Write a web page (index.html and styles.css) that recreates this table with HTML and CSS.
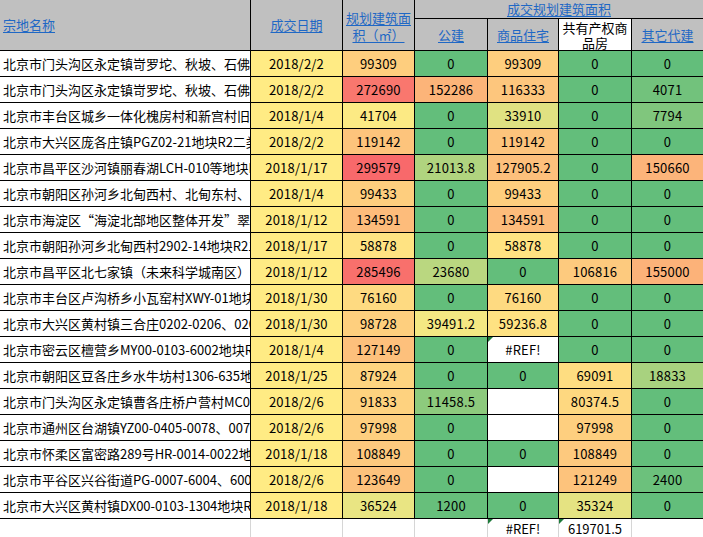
FILE: index.html
```html
<!DOCTYPE html>
<html lang="zh-CN">
<head>
<meta charset="utf-8">
<title>成交规划建筑面积</title>
<link rel="stylesheet" href="styles.css">
</head>
<body>
<div class="sheet">
  <div class="c h name"><span class="link">宗地名称</span></div>
  <div class="c h tall"><span class="link">成交日期</span></div>
  <div class="c h tall two"><span class="line"><span class="link">规划建筑面</span></span><span class="line"><span class="link">积（㎡）</span></span></div>
  <div class="c h group"><span class="link">成交规划建筑面积</span></div>
  <div class="c h"><span class="link">公建</span></div>
  <div class="c h"><span class="link">商品住宅</span></div>
  <div class="c h plain"><span class="pline">共有产权商</span><span class="pline">品房</span></div>
  <div class="c h"><span class="link">其它代建</span></div>

  <div class="c t"><span class="clip">北京市门头沟区永定镇岢罗坨、秋坡、石佛寺</span></div>
  <div class="c n" style="background:#ffeb84">2018/2/2</div>
  <div class="c n" style="background:#fece7e">99309</div>
  <div class="c n" style="background:#63be7b">0</div>
  <div class="c n" style="background:#fece7e">99309</div>
  <div class="c n" style="background:#63be7b">0</div>
  <div class="c n" style="background:#63be7b">0</div>

  <div class="c t"><span class="clip">北京市门头沟区永定镇岢罗坨、秋坡、石佛寺</span></div>
  <div class="c n" style="background:#ffeb84">2018/2/2</div>
  <div class="c n" style="background:#f9776e">272690</div>
  <div class="c n" style="background:#fcb479">152286</div>
  <div class="c n" style="background:#fdc67d">116333</div>
  <div class="c n" style="background:#63be7b">0</div>
  <div class="c n" style="background:#72c27c">4071</div>

  <div class="c t"><span class="clip">北京市丰台区城乡一体化槐房村和新宫村旧村</span></div>
  <div class="c n" style="background:#ffeb84">2018/1/4</div>
  <div class="c n" style="background:#fcea84">41704</div>
  <div class="c n" style="background:#63be7b">0</div>
  <div class="c n" style="background:#e0e282">33910</div>
  <div class="c n" style="background:#63be7b">0</div>
  <div class="c n" style="background:#80c67d">7794</div>

  <div class="c t"><span class="clip">北京市大兴区庞各庄镇PGZ02-21地块R2二类</span></div>
  <div class="c n" style="background:#ffeb84">2018/2/2</div>
  <div class="c n" style="background:#fdc47c">119142</div>
  <div class="c n" style="background:#63be7b">0</div>
  <div class="c n" style="background:#fdc47c">119142</div>
  <div class="c n" style="background:#63be7b">0</div>
  <div class="c n" style="background:#63be7b">0</div>

  <div class="c t"><span class="clip">北京市昌平区沙河镇丽春湖LCH-010等地块F1</span></div>
  <div class="c n" style="background:#ffeb84">2018/1/17</div>
  <div class="c n" style="background:#f8696b">299579</div>
  <div class="c n" style="background:#b0d47f">21013.8</div>
  <div class="c n" style="background:#fdc07c">127905.2</div>
  <div class="c n" style="background:#63be7b">0</div>
  <div class="c n" style="background:#fcb47a">150660</div>

  <div class="c t"><span class="clip">北京市朝阳区孙河乡北甸西村、北甸东村、西</span></div>
  <div class="c n" style="background:#ffeb84">2018/1/4</div>
  <div class="c n" style="background:#fece7e">99433</div>
  <div class="c n" style="background:#63be7b">0</div>
  <div class="c n" style="background:#fece7e">99433</div>
  <div class="c n" style="background:#63be7b">0</div>
  <div class="c n" style="background:#63be7b">0</div>

  <div class="c t"><span class="clip">北京市海淀区“海淀北部地区整体开发”翠湖</span></div>
  <div class="c n" style="background:#ffeb84">2018/1/12</div>
  <div class="c n" style="background:#fdbc7b">134591</div>
  <div class="c n" style="background:#63be7b">0</div>
  <div class="c n" style="background:#fdbc7b">134591</div>
  <div class="c n" style="background:#63be7b">0</div>
  <div class="c n" style="background:#63be7b">0</div>

  <div class="c t"><span class="clip">北京市朝阳孙河乡北甸西村2902-14地块R2二</span></div>
  <div class="c n" style="background:#ffeb84">2018/1/17</div>
  <div class="c n" style="background:#ffe382">58878</div>
  <div class="c n" style="background:#63be7b">0</div>
  <div class="c n" style="background:#ffe382">58878</div>
  <div class="c n" style="background:#63be7b">0</div>
  <div class="c n" style="background:#63be7b">0</div>

  <div class="c t"><span class="clip">北京市昌平区北七家镇（未来科学城南区）地</span></div>
  <div class="c n" style="background:#ffeb84">2018/1/12</div>
  <div class="c n" style="background:#f8706c">285496</div>
  <div class="c n" style="background:#bad780">23680</div>
  <div class="c n" style="background:#63be7b">0</div>
  <div class="c n" style="background:#fdca7e">106816</div>
  <div class="c n" style="background:#fcb279">155000</div>

  <div class="c t"><span class="clip">北京市丰台区卢沟桥乡小瓦窑村XWY-01地块R</span></div>
  <div class="c n" style="background:#ffeb84">2018/1/30</div>
  <div class="c n" style="background:#feda81">76160</div>
  <div class="c n" style="background:#63be7b">0</div>
  <div class="c n" style="background:#feda81">76160</div>
  <div class="c n" style="background:#63be7b">0</div>
  <div class="c n" style="background:#63be7b">0</div>

  <div class="c t"><span class="clip">北京市大兴区黄村镇三合庄0202-0206、0202</span></div>
  <div class="c n" style="background:#ffeb84">2018/1/30</div>
  <div class="c n" style="background:#fecf7e">98728</div>
  <div class="c n" style="background:#f4e883">39491.2</div>
  <div class="c n" style="background:#fee282">59236.8</div>
  <div class="c n" style="background:#63be7b">0</div>
  <div class="c n" style="background:#63be7b">0</div>

  <div class="c t"><span class="clip">北京市密云区檀营乡MY00-0103-6002地块R2</span></div>
  <div class="c n" style="background:#ffeb84">2018/1/4</div>
  <div class="c n" style="background:#fdc07c">127149</div>
  <div class="c n" style="background:#63be7b">0</div>
  <div class="c n flag">#REF!</div>
  <div class="c n" style="background:#63be7b">0</div>
  <div class="c n" style="background:#63be7b">0</div>

  <div class="c t"><span class="clip">北京市朝阳区豆各庄乡水牛坊村1306-635地块</span></div>
  <div class="c n" style="background:#ffeb84">2018/1/25</div>
  <div class="c n" style="background:#fed480">87924</div>
  <div class="c n" style="background:#63be7b">0</div>
  <div class="c n" style="background:#63be7b">0</div>
  <div class="c n" style="background:#fedd81">69091</div>
  <div class="c n" style="background:#a8d27f">18833</div>

  <div class="c t"><span class="clip">北京市门头沟区永定镇曹各庄桥户营村MC00-</span></div>
  <div class="c n" style="background:#ffeb84">2018/2/6</div>
  <div class="c n" style="background:#fed27f">91833</div>
  <div class="c n" style="background:#8dca7d">11458.5</div>
  <div class="c n"></div>
  <div class="c n" style="background:#fed880">80374.5</div>
  <div class="c n" style="background:#63be7b">0</div>

  <div class="c t"><span class="clip">北京市通州区台湖镇YZ00-0405-0078、0079</span></div>
  <div class="c n" style="background:#ffeb84">2018/2/6</div>
  <div class="c n" style="background:#fecf7f">97998</div>
  <div class="c n" style="background:#63be7b">0</div>
  <div class="c n"></div>
  <div class="c n" style="background:#fecf7f">97998</div>
  <div class="c n" style="background:#63be7b">0</div>

  <div class="c t"><span class="clip">北京市怀柔区富密路289号HR-0014-0022地块</span></div>
  <div class="c n" style="background:#ffeb84">2018/1/18</div>
  <div class="c n" style="background:#fdc97e">108849</div>
  <div class="c n" style="background:#63be7b">0</div>
  <div class="c n" style="background:#63be7b">0</div>
  <div class="c n" style="background:#fdc97e">108849</div>
  <div class="c n" style="background:#63be7b">0</div>

  <div class="c t"><span class="clip">北京市平谷区兴谷街道PG-0007-6004、6005</span></div>
  <div class="c n" style="background:#ffeb84">2018/2/6</div>
  <div class="c n" style="background:#fdc27c">123649</div>
  <div class="c n" style="background:#63be7b">0</div>
  <div class="c n"></div>
  <div class="c n" style="background:#fdc37c">121249</div>
  <div class="c n" style="background:#6cc17c">2400</div>

  <div class="c t"><span class="clip">北京市大兴区黄村镇DX00-0103-1304地块R2</span></div>
  <div class="c n" style="background:#ffeb84">2018/1/18</div>
  <div class="c n" style="background:#e9e583">36524</div>
  <div class="c n" style="background:#67bf7b">1200</div>
  <div class="c n" style="background:#63be7b">0</div>
  <div class="c n" style="background:#e5e382">35324</div>
  <div class="c n" style="background:#63be7b">0</div>

  <div class="c g"></div>
  <div class="c g"></div>
  <div class="c g"></div>
  <div class="c g"></div>
  <div class="c g flag">#REF!</div>
  <div class="c g flag">619701.5</div>
  <div class="c g"></div>
</div>
</body>
</html>
```

FILE: styles.css
```css
html, body {
  margin: 0;
  padding: 0;
  overflow: hidden;
  background: #ffffff;
}

.sheet {
  display: grid;
  grid-template-columns: 251px 92px 72px 73px 71px 73px 72px;
  grid-template-rows: 19px 32px repeat(18, 26px) 26px;
  font-family: "Noto Sans CJK SC", sans-serif;
  font-size: 13px;
  color: #000000;
  width: 704px;
}

.c {
  box-sizing: border-box;
  border-right: 1px solid #000000;
  border-bottom: 1px solid #000000;
  display: flex;
  align-items: center;
  justify-content: center;
  overflow: hidden;
  white-space: nowrap;
  position: relative;
  background: #ffffff;
  line-height: 16px;
}

.h {
  background: #c0c0c0;
}

.name {
  grid-row: span 2;
  justify-content: flex-start;
  padding-left: 3px;
}

.tall {
  grid-row: span 2;
}

.two {
  flex-direction: column;
  padding-top: 2px;
}

.line {
  display: block;
  height: 17px;
  line-height: 17px;
  text-align: center;
}

.group {
  grid-column: span 4;
}

.plain {
  background: #ffffff;
  flex-direction: column;
  padding-top: 1px;
}

.pline {
  display: block;
  height: 15px;
  line-height: 15px;
  text-align: center;
}

.link {
  color: #1f68c5;
  text-decoration: underline;
  text-underline-offset: 2px;
}

.t {
  justify-content: flex-start;
  padding-left: 3px;
}

.clip {
  display: block;
  width: 100%;
  overflow: hidden;
  white-space: nowrap;
}

.n {
  letter-spacing: 0.2px;
}

.g {
  border-right: 1px solid #d6d6d6;
  border-bottom: none;
  align-items: flex-start;
  padding-top: 2px;
}

.flag::before {
  content: "";
  position: absolute;
  left: 0;
  top: 0;
  width: 0;
  height: 0;
  border-top: 5px solid #1d7a3a;
  border-right: 5px solid transparent;
}
```
